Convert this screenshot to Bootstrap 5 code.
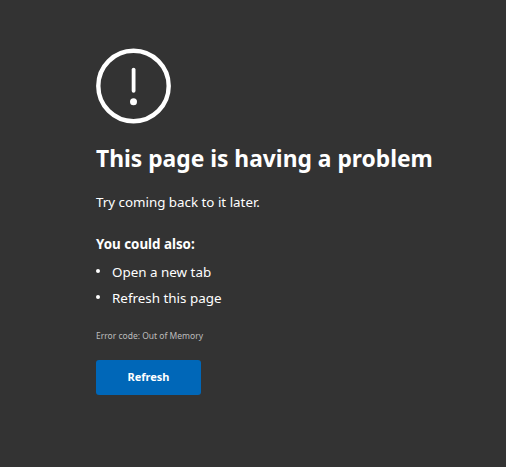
<!DOCTYPE html>
<html lang="en">
<head>
<meta charset="utf-8">
<title>Error</title>
<link href="https://cdn.jsdelivr.net/npm/bootstrap@5.3.0/dist/css/bootstrap.min.css" rel="stylesheet">
<style>
html, body { height: 100%; }
body { background: #333333; color: #fff; font-family: "Noto Sans", "Open Sans", sans-serif; overflow: hidden; }
.err-wrap { padding: 48px 0 0 96px; }
.err-icon { display: block; width: 76px; height: 76px; margin-bottom: 19px; }
.err-title { font-size: 22.8px; line-height: 32px; font-weight: 700; margin: 0 0 17px; white-space: nowrap; }
.err-sub { font-size: 13.35px; line-height: 20px; margin: 0 0 22px; }
.err-also { font-size: 13.35px; line-height: 20px; font-weight: 700; margin: 0 0 5px; }
.err-list { list-style: none; font-size: 13.4px; line-height: 20px; margin: 0 0 19px; padding: 0; }
.err-list li { padding: 3px 0 3px 16px; position: relative; }
.err-list li::before { content: ""; position: absolute; left: 0; top: 10px; width: 4px; height: 4px; border-radius: 50%; background: #fff; }
.err-code { font-size: 8.5px; line-height: 12px; color: #bdbdbd; margin: 0 0 18px; }
.err-btn { width: 105px; height: 35px; padding: 0; font-size: 11px; font-weight: 700; color: #fff; background: #0067b8; border: 0; border-radius: 3px; }
</style>
</head>
<body>
<main class="err-wrap">
  <svg class="err-icon" viewBox="0 0 76 76" aria-hidden="true">
    <circle cx="37.5" cy="38" r="35.2" fill="none" stroke="#fff" stroke-width="4.4"/>
    <rect x="35.7" y="19.7" width="3.8" height="25" rx="1.9" fill="#fff"/>
    <circle cx="37.5" cy="53.7" r="3.5" fill="#fff"/>
  </svg>
  <h1 class="err-title">This page is having a problem</h1>
  <p class="err-sub">Try coming back to it later.</p>
  <p class="err-also">You could also:</p>
  <ul class="err-list">
    <li>Open a new tab</li>
    <li>Refresh this page</li>
  </ul>
  <p class="err-code">Error code: Out of Memory</p>
  <button type="button" class="btn err-btn">Refresh</button>
</main>
<script src="https://cdn.jsdelivr.net/npm/bootstrap@5.3.0/dist/js/bootstrap.bundle.min.js"></script>
</body>
</html>
